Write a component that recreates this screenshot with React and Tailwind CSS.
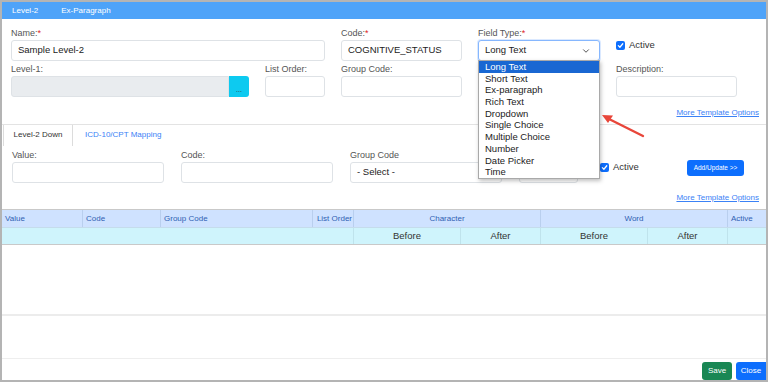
import React from "react";
import { ChevronDown } from "lucide-react";

const Check = () => (
  <span className="w-[9px] h-[9px] bg-[#0d6efd] rounded-[2px] flex items-center justify-center shrink-0">
    <svg width="7" height="7" viewBox="0 0 8 8">
      <path d="M1.5 4.2 L3.3 6 L6.6 2" stroke="white" strokeWidth="1.4" fill="none" strokeLinecap="round" strokeLinejoin="round" />
    </svg>
  </span>
);

const Label = ({ children, req }) => (
  <div className="h-[13px] text-[9px] leading-[13px] text-[#555] whitespace-nowrap">
    {children}
    {req && <span className="text-[#e02424]">*</span>}
  </div>
);

const Input = ({ children, cls = "" }) => (
  <div className={`h-[21px] border border-[#dee2e6] rounded-[3px] bg-white flex items-center px-[6px] text-[9.5px] text-[#222] whitespace-nowrap ${cls}`}>
    {children}
  </div>
);

const items = ["Long Text", "Short Text", "Ex-paragraph", "Rich Text", "Dropdown", "Single Choice", "Multiple Choice", "Number", "Date Picker", "Time"];

export default function App() {
  return (
    <div className="w-[768px] h-[382px] border-2 border-[#b4b4b4] bg-white relative overflow-hidden flex flex-col font-['Liberation_Sans',Arial,sans-serif]">
      {/* top bar */}
      <div className="h-[17px] bg-[#4ea3f9] flex items-center pl-[10px] gap-[23px] text-white text-[8px] shrink-0">
        <span>Level-2</span>
        <span>Ex-Paragraph</span>
      </div>

      {/* form */}
      <div className="pl-[9px] pr-[7px] pt-[8px] shrink-0">
        <div className="flex gap-[16px]">
          <div className="w-[314px] shrink-0">
            <Label req>Name:</Label>
            <Input cls="bg-[#e8f0fe] border-[#d5e2f7]">Sample Level-2</Input>
          </div>
          <div className="w-[121px] shrink-0">
            <Label req>Code:</Label>
            <Input>COGNITIVE_STATUS</Input>
          </div>
          <div className="w-[122px] shrink-0">
            <Label req>Field Type:</Label>
            <div className="h-[21px] border border-[#86b7fe] rounded-[3px] bg-white flex items-center justify-between pl-[6px] pr-[8px] text-[9.5px] text-[#222] shadow-[0_0_0_1px_rgba(13,110,253,0.15)]">
              <span>Long Text</span>
              <ChevronDown size={10} strokeWidth={2} color="#333" />
            </div>
          </div>
          <div className="w-[121px] shrink-0 pt-[12px]">
            <div className="h-[12px] flex items-center gap-[4px] text-[9.5px] text-[#333]">
              <Check />
              <span>Active</span>
            </div>
          </div>
        </div>

        <div className="flex gap-[16px] mt-[2px]">
          <div className="w-[238px] shrink-0">
            <Label>Level-1:</Label>
            <div className="flex h-[21px]">
              <div className="flex-1 bg-[#e9ecef] border border-[#dee2e6] rounded-l-[3px]" />
              <div className="w-[20px] bg-[#0dcaf0] rounded-r-[3px] flex items-end justify-center pb-[4px] text-[7px] leading-none text-[#333]">...</div>
            </div>
          </div>
          <div className="w-[60px] shrink-0">
            <Label>List Order:</Label>
            <Input />
          </div>
          <div className="w-[121px] shrink-0">
            <Label>Group Code:</Label>
            <Input />
          </div>
          <div className="w-[122px] shrink-0" />
          <div className="w-[121px] shrink-0">
            <Label>Description:</Label>
            <Input />
          </div>
        </div>

        <div className="mt-[10px] h-[12px] flex justify-end items-center text-[8px] text-[#3b82f6] underline">
          More Template Options
        </div>
      </div>

      {/* separator + tabs */}
      <div className="mt-[5px] border-t border-[#e3e3e3] shrink-0 h-[21px] flex items-center text-[8px]">
        <div className="ml-[1px] w-[70px] h-[21px] border-l border-r border-[#dcdcdc] flex items-center justify-center text-[#333]">Level-2 Down</div>
        <div className="ml-[12px] text-[#3b82f6]">ICD-10/CPT Mapping</div>
      </div>

      {/* row 3 */}
      <div className="pl-[10px] pr-[7px] mt-[4px] shrink-0">
        <div className="flex">
          <div className="w-[152px] shrink-0">
            <Label>Value:</Label>
            <Input />
          </div>
          <div className="w-[152px] shrink-0 ml-[17px]">
            <Label>Code:</Label>
            <Input />
          </div>
          <div className="w-[152px] shrink-0 ml-[17px]">
            <Label>Group Code</Label>
            <Input>- Select -</Input>
          </div>
          <div className="w-[59px] shrink-0 ml-[17px] pt-[13px]">
            <Input />
          </div>
          <div className="w-[87px] ml-[22px] shrink-0 pt-[12px]">
            <div className="h-[12px] flex items-center gap-[4px] text-[9.5px] text-[#333]">
              <Check />
              <span>Active</span>
            </div>
          </div>
          <div className="shrink-0 pt-[11px]">
            <div className="w-[57px] h-[16px] bg-[#0d6efd] rounded-[3px] flex items-center justify-center text-white text-[6.5px] whitespace-nowrap">Add/Update &gt;&gt;</div>
          </div>
        </div>
        <div className="mt-[9px] h-[12px] flex justify-end items-center text-[8px] text-[#3b82f6] underline">
          More Template Options
        </div>
      </div>

      {/* table */}
      <div className="mt-[5px] shrink-0 border-t border-[#c9c9c9] border-b">
        <div className="flex h-[17px] bg-[#cfe2ff] text-[8px] text-[#2f5fb3] items-center">
          <div className="w-[81px] h-full flex items-center pl-[3px] border-r border-[#b9cfee]">Value</div>
          <div className="w-[78px] h-full flex items-center pl-[3px] border-r border-[#b9cfee]">Code</div>
          <div className="w-[152px] h-full flex items-center pl-[3px] border-r border-[#b9cfee]">Group Code</div>
          <div className="w-[41px] h-full flex items-center justify-end pr-[1px] border-r border-[#b9cfee] whitespace-nowrap">List Order</div>
          <div className="w-[187px] h-full flex items-center justify-center border-r border-[#b9cfee]">Character</div>
          <div className="w-[187px] h-full flex items-center justify-center border-r border-[#b9cfee]">Word</div>
          <div className="w-[38px] h-full flex items-center pl-[3px]">Active</div>
        </div>
        <div className="flex h-[17px] bg-[#cff4fc] text-[9.5px] text-[#333] items-center border-t border-[#c5dcec]">
          <div className="w-[352px] h-full border-r border-[#bfe3ec]" />
          <div className="w-[107px] h-full flex items-center justify-center border-r border-[#bfe3ec]">Before</div>
          <div className="w-[80px] h-full flex items-center justify-center border-r border-[#bfe3ec]">After</div>
          <div className="w-[107px] h-full flex items-center justify-center border-r border-[#bfe3ec]">Before</div>
          <div className="w-[80px] h-full flex items-center justify-center border-r border-[#bfe3ec]">After</div>
          <div className="flex-1 h-full" />
        </div>
      </div>

      <div className="h-[69px] shrink-0" />
      <div className="h-[2px] bg-[#ececec] shrink-0" />
      <div className="h-[42px] shrink-0" />
      <div className="h-[1px] bg-[#eeeeee] shrink-0" />
      <div className="flex-1 flex justify-end items-start pt-[3px] gap-[4px]">
        <div className="w-[30px] h-[18px] bg-[#198754] rounded-[3px] flex items-center justify-center text-white text-[8px]">Save</div>
        <div className="w-[30px] h-[18px] bg-[#0d6efd] rounded-l-[3px] flex items-center justify-center text-white text-[8px]">Close</div>
      </div>

      {/* dropdown overlay */}
      <div className="absolute left-[476px] top-[58px] w-[122px] h-[119px] bg-white border border-[#a9a9a9] shadow-[1px_2px_4px_rgba(0,0,0,0.25)] text-[9.5px] text-[#222]">
        {items.map((it, i) => (
          <div key={it} className={`h-[11.7px] leading-[11.7px] pl-[6px] ${i === 0 ? "bg-[#1967d2] text-white" : ""}`}>{it}</div>
        ))}
      </div>

      {/* red arrow */}
      <svg className="absolute left-[596px] top-[106px]" width="50" height="32" viewBox="0 0 50 32">
        <line x1="45" y1="28" x2="11" y2="11" stroke="#e8463a" strokeWidth="2.4" strokeLinecap="round" />
        <polygon points="4,7 15,7.5 10,15" fill="#e8463a" />
      </svg>
    </div>
  );
}
